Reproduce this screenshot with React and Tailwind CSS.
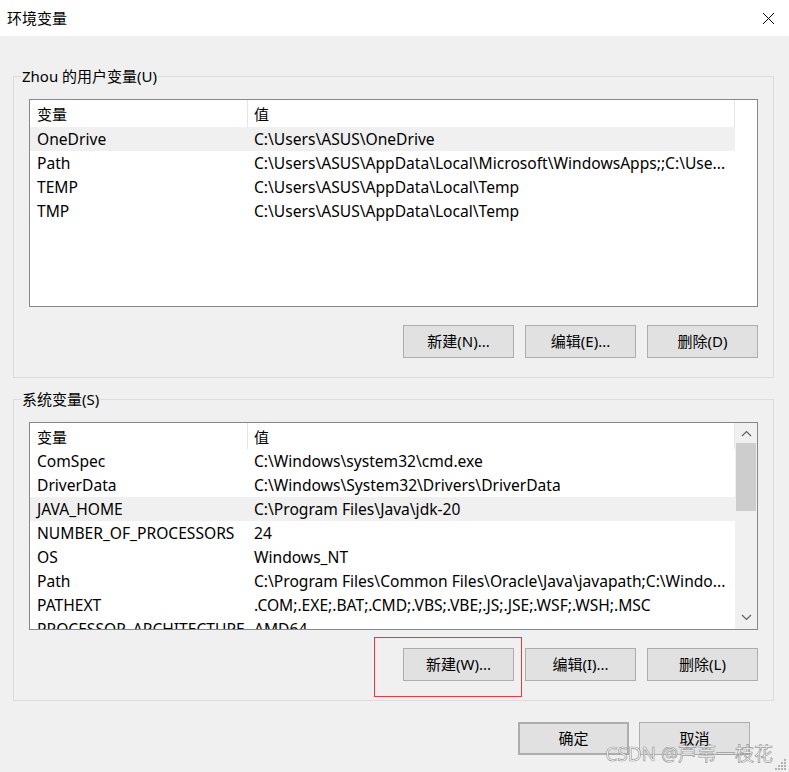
import React from 'react';

const userVars = [
  { name: 'OneDrive', value: 'C:\\Users\\ASUS\\OneDrive', selected: true },
  { name: 'Path', value: 'C:\\Users\\ASUS\\AppData\\Local\\Microsoft\\WindowsApps;;C:\\Use...' },
  { name: 'TEMP', value: 'C:\\Users\\ASUS\\AppData\\Local\\Temp' },
  { name: 'TMP', value: 'C:\\Users\\ASUS\\AppData\\Local\\Temp' },
];

const systemVars = [
  { name: 'ComSpec', value: 'C:\\Windows\\system32\\cmd.exe' },
  { name: 'DriverData', value: 'C:\\Windows\\System32\\Drivers\\DriverData' },
  { name: 'JAVA_HOME', value: 'C:\\Program Files\\Java\\jdk-20', selected: true },
  { name: 'NUMBER_OF_PROCESSORS', value: '24' },
  { name: 'OS', value: 'Windows_NT' },
  { name: 'Path', value: 'C:\\Program Files\\Common Files\\Oracle\\Java\\javapath;C:\\Windo...' },
  { name: 'PATHEXT', value: '.COM;.EXE;.BAT;.CMD;.VBS;.VBE;.JS;.JSE;.WSF;.WSH;.MSC' },
  { name: 'PROCESSOR_ARCHITECTURE', value: 'AMD64' },
];

function Chevron({ up }) {
  return (
    <svg width="11" height="7" viewBox="0 0 11 7" fill="none">
      <path
        d={up ? 'M1 6 L5.5 1.5 L10 6' : 'M1 1 L5.5 5.5 L10 1'}
        stroke="#606060"
        strokeWidth="1.2"
      />
    </svg>
  );
}

function Scrollbar() {
  return (
    <div className="w-[22px] bg-[#f0f0f0] flex flex-col items-center shrink-0">
      <div className="h-[20px] w-full flex items-center justify-center">
        <Chevron up />
      </div>
      <div className="w-[20px] h-[68px] bg-[#cdcdcd]" />
      <div className="flex-1" />
      <div className="h-[20px] w-full flex items-center justify-center mb-[2px]">
        <Chevron />
      </div>
    </div>
  );
}

function VarList({ rows, headerH, scroll }) {
  return (
    <div className="border border-[#828790] bg-white h-[208px] flex overflow-hidden">
      <div className="w-[705px] shrink-0">
        <div className="flex" style={{ height: headerH }}>
          <div className="w-[218px] pl-[7px] pt-[2px] border-r border-[#e5e5e5] flex items-center">变量</div>
          <div className="w-[487px] pl-[6px] pt-[2px] border-r border-[#e5e5e5] flex items-center">值</div>
        </div>
        {rows.map((r) => (
          <div
            key={r.name}
            className={`flex h-[24px] pt-[2px] items-center whitespace-nowrap text-[15.6px] ${r.selected ? 'bg-[#f0f0f0]' : ''}`}
          >
            <div className="w-[218px] pl-[7px] overflow-hidden">{r.name}</div>
            <div className="w-[487px] pl-[6px] overflow-hidden">{r.value}</div>
          </div>
        ))}
      </div>
      <div className="flex-1" />
      {scroll && <Scrollbar />}
    </div>
  );
}

function Btn({ children, className = '' }) {
  return (
    <button className={`w-[111px] h-[33px] bg-[#e1e1e1] border border-[#adadad] text-[15px] flex items-center justify-center ${className}`}>
      {children}
    </button>
  );
}

function Group({ label, children, className = '' }) {
  return (
    <fieldset className={`border border-[#dcdcdc] min-w-0 ${className}`}>
      <legend className="ml-[7px] px-[1px] leading-[20px]">{label}</legend>
      <div className="px-[15px] pt-[13px] pb-[19px]">{children}</div>
    </fieldset>
  );
}

export default function App() {
  return (
    <div className="w-[789px] h-[772px] bg-[#f0f0f0] text-black text-[15px] relative overflow-hidden font-['Noto_Sans','Noto_Sans_CJK_SC',sans-serif]">
      <div className="h-[36px] bg-white flex items-center justify-between pl-[7px] pr-[14px]">
        <span className="text-[15px]">环境变量</span>
        <svg width="13" height="13" viewBox="0 0 13 13">
          <path d="M1 1 L12 12 M12 1 L1 12" stroke="#000" strokeWidth="1" />
        </svg>
      </div>

      <div className="pl-[13px] pr-[15px] pt-[30px]">
        <Group label="Zhou 的用户变量(U)">
          <VarList rows={userVars} headerH={27} />
          <div className="flex justify-end gap-[11px] mt-[18px]">
            <Btn>新建(N)...</Btn>
            <Btn>编辑(E)...</Btn>
            <Btn>删除(D)</Btn>
          </div>
        </Group>

        <Group label="系统变量(S)" className="mt-[11px]">
          <VarList rows={systemVars} headerH={26} scroll />
          <div className="flex justify-end gap-[11px] mt-[18px]">
            <div className="relative">
              <Btn>新建(W)...</Btn>
              <span className="absolute left-[-29px] top-[-11px] w-[148px] h-[60px] border border-[#e8393d] pointer-events-none" />
            </div>
            <Btn>编辑(I)...</Btn>
            <Btn>删除(L)</Btn>
          </div>
        </Group>

        <div className="flex justify-end gap-[10px] mt-[21px] mr-[24px]">
          <Btn className="border-2 border-[#0078d7]">确定</Btn>
          <Btn>取消</Btn>
        </div>
      </div>

      <div className="absolute right-[16px] bottom-[8px] text-[19px] leading-none text-white/90 [-webkit-text-stroke:0.7px_rgba(110,110,110,0.7)] pointer-events-none">
        CSDN @芦苇一枝花
      </div>

      <svg className="absolute right-[2px] bottom-[2px]" width="12" height="12" viewBox="0 0 12 12">
        <g fill="#b0b0b0">
          <rect x="9" y="1" width="2" height="2" />
          <rect x="6" y="4" width="2" height="2" />
          <rect x="9" y="4" width="2" height="2" />
          <rect x="3" y="7" width="2" height="2" />
          <rect x="6" y="7" width="2" height="2" />
          <rect x="9" y="7" width="2" height="2" />
          <rect x="0" y="10" width="2" height="2" />
          <rect x="3" y="10" width="2" height="2" />
          <rect x="6" y="10" width="2" height="2" />
          <rect x="9" y="10" width="2" height="2" />
        </g>
      </svg>
    </div>
  );
}
